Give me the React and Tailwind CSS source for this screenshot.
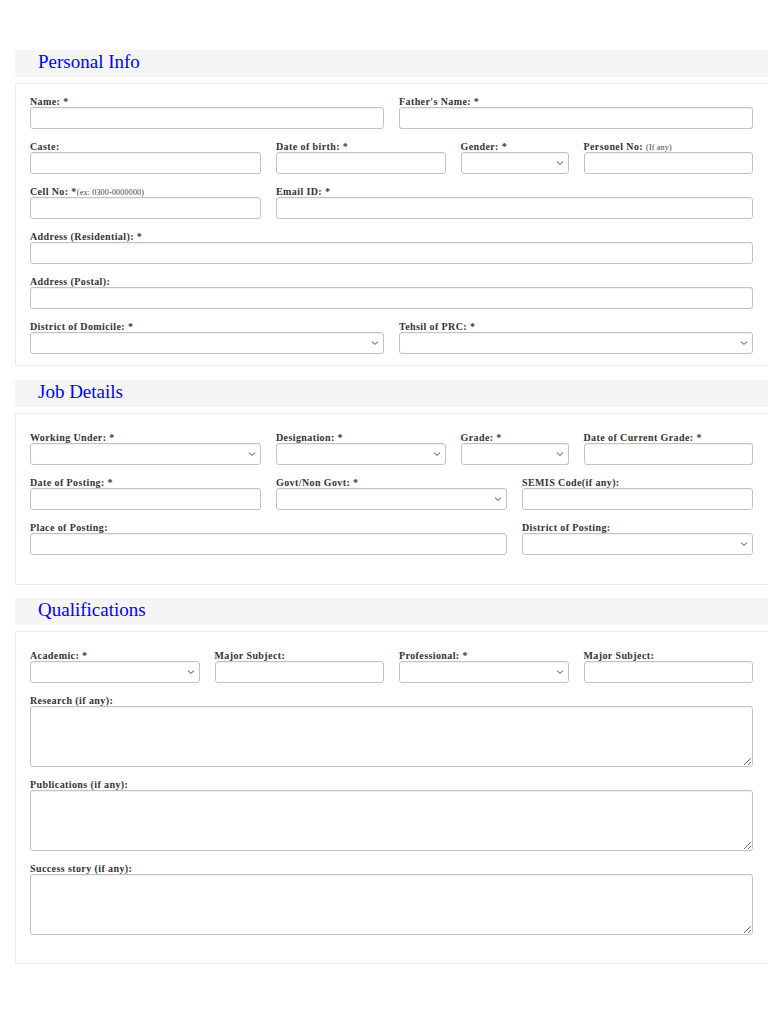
const SPAN = {
  2: "col-span-2",
  3: "col-span-3",
  4: "col-span-4",
  6: "col-span-6",
  8: "col-span-8",
  12: "col-span-12",
};

const boxCls =
  "block w-full rounded-[3px] border border-[#c2c2c2] bg-white shadow-[inset_0_1px_1px_rgba(0,0,0,0.06)] outline-none";

function Chevron() {
  return (
    <svg
      width="8"
      height="5"
      viewBox="0 0 8 5"
      className="pointer-events-none absolute right-[5px] top-1/2 -translate-y-1/2"
    >
      <path d="M1 1.2 L4 3.8 L7 1.2" fill="none" stroke="#777" strokeWidth="1.1" />
    </svg>
  );
}

function Field({ label, note, tight, span = 12, kind = "input" }) {
  return (
    <div className={SPAN[span]}>
      <label className="block h-[12px] pt-[1px] text-[10px] leading-[12px] font-bold tracking-[0.4px] text-[#333] whitespace-nowrap">
        {label}
        {note && (
          <span className={`${tight ? "" : "ml-[3px]"} text-[8px] font-normal tracking-[0.2px] text-[#444]`}>
            {note}
          </span>
        )}
      </label>
      {kind === "select" ? (
        <div className="relative">
          <select className={`${boxCls} h-[22px] appearance-none`} defaultValue="">
            <option value=""></option>
          </select>
          <Chevron />
        </div>
      ) : kind === "textarea" ? (
        <textarea className={`${boxCls} h-[61px]`} />
      ) : (
        <input type="text" className={`${boxCls} h-[22px]`} />
      )}
    </div>
  );
}

function Section({ title, pad, children }) {
  return (
    <section>
      <div className="ml-[15px] flex h-[27px] items-center bg-[#f5f5f5] pl-[23px]">
        <h2 className="-mt-[5px] text-[19px] leading-none text-[#0000ff]">{title}</h2>
      </div>
      <div className={`ml-[15px] mt-[6px] border border-r-0 border-[#ececec] pl-[14px] pr-[15px] ${pad}`}>
        <div className="grid grid-cols-12 gap-x-[15px] gap-y-[11px]">{children}</div>
      </div>
    </section>
  );
}

export default function App() {
  return (
    <div className="min-h-[1024px] bg-white pt-[50px] font-['Liberation_Serif','DejaVu_Serif',serif]">
      <Section title="Personal Info" pad="pt-[11px] pb-[11px]">
        <Field label="Name: *" span={6} />
        <Field label="Father's Name: *" span={6} />
        <Field label="Caste:" span={4} />
        <Field label="Date of birth: *" span={3} />
        <Field label="Gender: *" span={2} kind="select" />
        <Field label="Personel No:" note="(If any)" span={3} />
        <Field label="Cell No: *" note="(ex: 0300-0000000)" tight span={4} />
        <Field label="Email ID: *" span={8} />
        <Field label="Address (Residential): *" span={12} />
        <Field label="Address (Postal):" span={12} />
        <Field label="District of Domicile: *" span={6} kind="select" />
        <Field label="Tehsil of PRC: *" span={6} kind="select" />
      </Section>

      <div className="h-[14px]" />

      <Section title="Job Details" pad="pt-[17px] pb-[29px]">
        <Field label="Working Under: *" span={4} kind="select" />
        <Field label="Designation: *" span={3} kind="select" />
        <Field label="Grade: *" span={2} kind="select" />
        <Field label="Date of Current Grade: *" span={3} />
        <Field label="Date of Posting: *" span={4} />
        <Field label="Govt/Non Govt: *" span={4} kind="select" />
        <Field label="SEMIS Code(if any):" span={4} />
        <Field label="Place of Posting:" span={8} />
        <Field label="District of Posting:" span={4} kind="select" />
      </Section>

      <div className="h-[13px]" />

      <Section title="Qualifications" pad="pt-[17px] pb-[28px]">
        <Field label="Academic: *" span={3} kind="select" />
        <Field label="Major Subject:" span={3} />
        <Field label="Professional: *" span={3} kind="select" />
        <Field label="Major Subject:" span={3} />
        <Field label="Research (if any):" span={12} kind="textarea" />
        <Field label="Publications (if any):" span={12} kind="textarea" />
        <Field label="Success story (if any):" span={12} kind="textarea" />
      </Section>
    </div>
  );
}
